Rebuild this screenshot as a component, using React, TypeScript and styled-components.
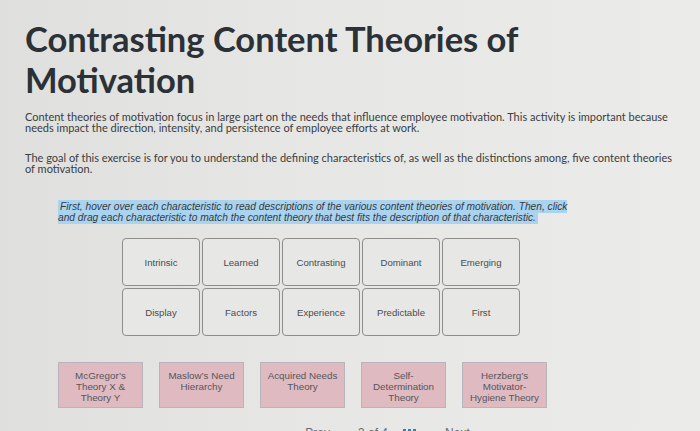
import React from 'react';
import styled, { createGlobalStyle } from 'styled-components';

const characteristics = [
  'Intrinsic',
  'Learned',
  'Contrasting',
  'Dominant',
  'Emerging',
  'Display',
  'Factors',
  'Experience',
  'Predictable',
  'First',
];

const theories = [
  ['McGregor\u2019s', 'Theory X &', 'Theory Y'],
  ['Maslow\u2019s Need', 'Hierarchy'],
  ['Acquired Needs', 'Theory'],
  ['Self-', 'Determination', 'Theory'],
  ['Herzberg\u2019s', 'Motivator-', 'Hygiene Theory'],
];

export default function App() {
  return (
    <>
      <GlobalStyle />
      <Page>
        <Title>
          Contrasting Content Theories of
          <br />
          Motivation
        </Title>
        <Intro>
          Content theories of motivation focus in large part on the needs that influence employee motivation. This activity is important because
          <br />
          needs impact the direction, intensity, and persistence of employee efforts at work.
        </Intro>
        <Intro>
          The goal of this exercise is for you to understand the defining characteristics of, as well as the distinctions among, five content theories
          <br />
          of motivation.
        </Intro>
        <Instruction>
          <Selected>
            First, hover over each characteristic to read descriptions of the various content theories of motivation. Then, click
            <br />
            and drag each characteristic to match the content theory that best fits the description of that characteristic.
          </Selected>
        </Instruction>
        <CardGrid>
          {characteristics.map((c) => (
            <Card key={c}>{c}</Card>
          ))}
        </CardGrid>
        <TheoryRow>
          {theories.map((lines) => (
            <Theory key={lines.join(' ')}>
              {lines.map((l) => (
                <div key={l}>{l}</div>
              ))}
            </Theory>
          ))}
        </TheoryRow>
        <Pager>
          <PagerLink>
            <Arrow>&#x2039;</Arrow> Prev
          </PagerLink>
          <PageCount>3 of 4</PageCount>
          <GridIcon viewBox="0 0 14 8">
            <rect x="0" y="0" width="3" height="2" />
            <rect x="5" y="0" width="3" height="2" />
            <rect x="10" y="0" width="3" height="2" />
            <rect x="0" y="4" width="3" height="2" />
            <rect x="5" y="4" width="3" height="2" />
            <rect x="10" y="4" width="3" height="2" />
          </GridIcon>
          <PagerLink>
            Next <Arrow>&#x203A;</Arrow>
          </PagerLink>
        </Pager>
      </Page>
    </>
  );
}

const GlobalStyle = createGlobalStyle`
  html, body {
    margin: 0;
    padding: 0;
    height: 100%;
    overflow: hidden;
  }
  body {
    background: linear-gradient(90deg, #dfe0dd 0%, #e6e7e4 40%, #ebebe9 100%);
  }
`;

const Page = styled.div`
  height: 431px;
  overflow: hidden;
  padding: 18px 0 0 25px;
  box-sizing: border-box;
  font-family: 'Lato', 'Open Sans', sans-serif;
  color: #33363b;
`;

const Title = styled.h1`
  margin: 0 0 11px;
  font-family: 'Lato', sans-serif;
  font-weight: 700;
  font-size: 34.5px;
  line-height: 41px;
  color: #2c3037;
`;

const Intro = styled.p`
  margin: 0 0 19px;
  font-size: 11px;
  line-height: 11px;
  color: #3a3d42;
  white-space: nowrap;
`;

const Instruction = styled.div`
  margin: 28px 0 0 33px;
  font-family: 'Liberation Sans', Arial, sans-serif;
  font-style: italic;
  font-size: 10.2px;
  line-height: 10.5px;
  color: #353a42;
  white-space: nowrap;
`;

const Selected = styled.span`
  background: #a9d3ee;
  padding: 1px 2px;
`;

const CardGrid = styled.div`
  display: grid;
  grid-template-columns: repeat(5, 78px);
  grid-auto-rows: 48px;
  gap: 2px;
  margin: 15px 0 0 97px;
`;

const Card = styled.div`
  display: flex;
  align-items: center;
  justify-content: center;
  border: 1px solid #8c8d8c;
  border-radius: 4px;
  background: #e7e8e5;
  font-family: 'Liberation Sans', Arial, sans-serif;
  font-size: 9.6px;
  color: #4a4c50;
`;

const TheoryRow = styled.div`
  display: flex;
  gap: 16px;
  margin: 26px 0 0 33px;
`;

const Theory = styled.div`
  width: 85px;
  height: 46px;
  box-sizing: border-box;
  padding-top: 8px;
  background: #dfbac1;
  border: 1px solid #b9b3bc;
  font-family: 'Liberation Sans', Arial, sans-serif;
  font-size: 9.8px;
  line-height: 10.8px;
  text-align: center;
  color: #55575c;
`;

const Pager = styled.div`
  display: flex;
  align-items: flex-start;
  margin: 18px 0 0 273px;
  font-family: 'Liberation Sans', Arial, sans-serif;
  font-size: 12px;
  color: #6a6d72;
`;

const PagerLink = styled.span`
  margin-right: 28px;
`;

const Arrow = styled.span`
  color: #2f7fc8;
  font-weight: 700;
`;

const PageCount = styled.span`
  margin-right: 15px;
`;

const GridIcon = styled.svg`
  width: 14px;
  height: 8px;
  margin: 3px 28px 0 0;
  fill: #2f7fc8;
`;
